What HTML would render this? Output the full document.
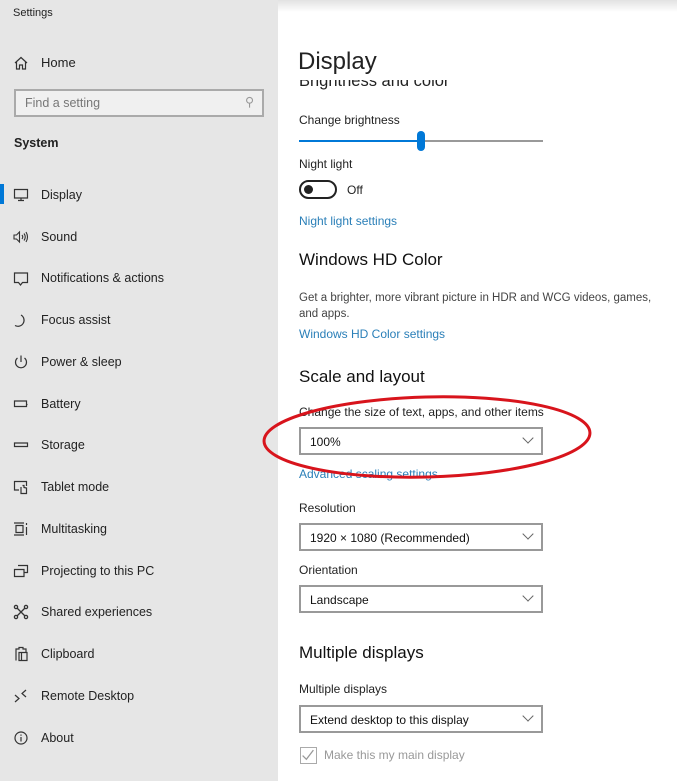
<!DOCTYPE html>
<html><head><meta charset="utf-8"><style>
*{margin:0;padding:0;box-sizing:border-box}
body{width:677px;height:781px;overflow:hidden;font-family:"Liberation Sans",sans-serif;color:#000;position:relative;background:#fff}
#side{position:absolute;left:0;top:0;width:278px;height:781px;background:#e6e6e6}
.a{position:absolute;white-space:nowrap}
.it{position:absolute;left:41px;font-size:12.5px;color:#222}
.ic{position:absolute;left:13px;width:16px;height:16px}
.dd{position:absolute;left:299px;width:244px;height:28px;border:2px solid #999;background:#fff;font-size:12px;padding:6px 0 0 9px;color:#111}
.dd:after{content:"";position:absolute;right:9px;top:5px;width:7px;height:7px;border-right:1px solid #666;border-bottom:1px solid #666;transform:rotate(45deg)}
.h{position:absolute;left:299px;font-size:17px;color:#111}
.lb{position:absolute;left:299px;font-size:12px;color:#222}
.lk{position:absolute;left:299px;font-size:12px;color:#2a7fb8}
</style></head><body>
<div style="position:absolute;left:278px;top:0;width:399px;height:12px;background:linear-gradient(#e2e2e2,#fff)"></div>
<div id="side">
<div class="a" style="left:13px;top:7px;font-size:11px;color:#222">Settings</div>
<svg class="ic" style="top:55px" viewBox="0 0 16 16" fill="none" stroke="#333" stroke-width="1.2"><path d="M2 8L8 2.5 14 8M3.5 6.5V14H6.5V10H9.5V14H12.5V6.5"/></svg>
<div class="it" style="top:55px;font-size:13px">Home</div>
<div class="a" style="left:14px;top:89px;width:250px;height:28px;border:2px solid #aaa;background:#f0f0f0;font-size:12.5px;color:#777;padding:5px 0 0 9px">Find a setting<span style="position:absolute;right:8px;top:3px;color:#999;transform:scaleX(-1);display:inline-block">⚲</span></div>
<div class="a" style="left:14px;top:136px;font-size:12.5px;font-weight:bold;color:#222">System</div>
<div class="a" style="left:0;top:184px;width:4px;height:20px;background:#0078d7"></div>
<svg class="ic" style="top:187px" viewBox="0 0 16 16" fill="none" stroke="#333" stroke-width="1.2"><path d="M1.5 2.5H14.5V11H1.5ZM8 11V13.5M5 13.5H11"/></svg>
<div class="it" style="top:188px">Display</div>
<svg class="ic" style="top:229px" viewBox="0 0 16 16" fill="none" stroke="#333" stroke-width="1.1"><path d="M1 6H3.5L6.5 3V13L3.5 10H1ZM9 6Q10.5 8 9 10M11 4.5Q13.5 8 11 11.5M13 3Q16 8 13 13"/></svg>
<div class="it" style="top:230px">Sound</div>
<svg class="ic" style="top:271px" viewBox="0 0 16 16" fill="none" stroke="#333" stroke-width="1.2"><path d="M1.5 2H14.5V11.5H9.5L7.5 14L5.5 11.5H1.5Z"/></svg>
<div class="it" style="top:271px">Notifications &amp; actions</div>
<svg class="ic" style="top:313px" viewBox="0 0 16 16" fill="none" stroke="#333" stroke-width="1.2"><path d="M8 2A6 6 0 1 1 2 12.5A5 5 0 0 0 8 2Z"/></svg>
<div class="it" style="top:313px">Focus assist</div>
<svg class="ic" style="top:354px" viewBox="0 0 16 16" fill="none" stroke="#333" stroke-width="1.2"><path d="M8 1.5V8M4.5 4A5.5 5.5 0 1 0 11.5 4"/></svg>
<div class="it" style="top:355px">Power &amp; sleep</div>
<svg class="ic" style="top:396px" viewBox="0 0 16 16" fill="none" stroke="#333" stroke-width="1.2"><path d="M1.5 5H13.5V10.5H1.5ZM13.5 7V8.5H14.5"/></svg>
<div class="it" style="top:397px">Battery</div>
<svg class="ic" style="top:437px" viewBox="0 0 16 16" fill="none" stroke="#333" stroke-width="1.2"><path d="M1.5 6H14.5V9.5H1.5Z"/></svg>
<div class="it" style="top:438px">Storage</div>
<svg class="ic" style="top:479px" viewBox="0 0 16 16" fill="none" stroke="#333" stroke-width="1.2"><path d="M6 11H1.5V2.5H13.5V7M8 8V14.5H13.5V9L11 8.5V6.5H9.5"/></svg>
<div class="it" style="top:480px">Tablet mode</div>
<svg class="ic" style="top:521px" viewBox="0 0 16 16" fill="none" stroke="#333" stroke-width="1.2"><path d="M1 2H11M1 14H11M3 4.5H10V11.5H3ZM13.5 2V4M13.5 6V14"/></svg>
<div class="it" style="top:522px">Multitasking</div>
<svg class="ic" style="top:563px" viewBox="0 0 16 16" fill="none" stroke="#333" stroke-width="1.2"><path d="M5 2.5H14.5V9.5H11M1.5 6.5H11V13.5H1.5Z"/></svg>
<div class="it" style="top:564px">Projecting to this PC</div>
<svg class="ic" style="top:604px" viewBox="0 0 16 16" fill="none" stroke="#333" stroke-width="1.3"><path d="M4 4L12 12M12 4L4 12"/><circle cx="3" cy="3" r="1.6"/><circle cx="13" cy="3" r="1.6"/><circle cx="3" cy="13" r="1.6"/><circle cx="13" cy="13" r="1.6"/></svg>
<div class="it" style="top:605px">Shared experiences</div>
<svg class="ic" style="top:646px" viewBox="0 0 16 16" fill="none" stroke="#333" stroke-width="1.2"><path d="M3 14.5V3H6V1.5H10V3H13V6M6 6.5H14V14.5H6ZM8.5 6.5V14.5"/></svg>
<div class="it" style="top:647px">Clipboard</div>
<svg class="ic" style="top:688px" viewBox="0 0 16 16" fill="none" stroke="#333" stroke-width="1.2"><path d="M2 7L6 10.5L2 14M13 2L9 5.5L13 9"/></svg>
<div class="it" style="top:689px">Remote Desktop</div>
<svg class="ic" style="top:730px" viewBox="0 0 16 16" fill="none" stroke="#333" stroke-width="1.2"><circle cx="8" cy="8" r="6"/><path d="M8 7V11.5M8 4.5V5.8"/></svg>
<div class="it" style="top:731px">About</div>
</div>

<div class="a" style="left:298px;top:48px;font-size:24px;color:#222">Display</div>
<div class="a" style="left:299px;top:80px;height:12px;overflow:hidden"><div style="font-size:16.5px;margin-top:-8px;color:#222">Brightness and color</div></div>
<div class="lb" style="top:113px">Change brightness</div>
<div class="a" style="left:299px;top:140px;width:122px;height:2px;background:#0078d7"></div>
<div class="a" style="left:421px;top:140px;width:122px;height:2px;background:#999"></div>
<div class="a" style="left:417px;top:131px;width:8px;height:20px;border-radius:4px;background:#0078d7"></div>
<div class="lb" style="top:157px">Night light</div>
<div class="a" style="left:299px;top:180px;width:38px;height:19px;border:2px solid #222;border-radius:10px"><div style="position:absolute;left:3px;top:3px;width:9px;height:9px;border-radius:50%;background:#222"></div></div>
<div class="lb" style="left:347px;top:183px">Off</div>
<div class="lk" style="top:214px">Night light settings</div>
<div class="h" style="top:250px">Windows HD Color</div>
<div class="lb" style="top:290px;font-size:11.5px;color:#444;line-height:16px;width:366px;white-space:normal">Get a brighter, more vibrant picture in HDR and WCG videos, games, and apps.</div>
<div class="lk" style="top:327px">Windows HD Color settings</div>
<div class="h" style="top:367px">Scale and layout</div>
<div class="lb" style="top:405px">Change the size of text, apps, and other items</div>
<div class="dd" style="top:427px">100%</div>
<div class="lk" style="top:467px">Advanced scaling settings</div>
<svg class="a" style="left:0;top:0" width="677" height="781"><ellipse cx="427" cy="437" rx="163" ry="40" transform="rotate(-1.5 427 437)" fill="none" stroke="#d8141c" stroke-width="3"/></svg>
<div class="lb" style="top:501px">Resolution</div>
<div class="dd" style="top:523px">1920 × 1080 (Recommended)</div>
<div class="lb" style="top:563px">Orientation</div>
<div class="dd" style="top:585px">Landscape</div>
<div class="h" style="top:643px">Multiple displays</div>
<div class="lb" style="top:682px">Multiple displays</div>
<div class="dd" style="top:705px">Extend desktop to this display</div>
<div class="a" style="left:300px;top:747px;width:17px;height:17px;border:1.5px solid #aaa"><svg width="14" height="14" viewBox="0 0 13 13" style="position:absolute;left:0;top:0"><path d="M1.5 7L5 10.5L11.5 2" fill="none" stroke="#999" stroke-width="1.2"/></svg></div>
<div class="lb" style="left:324px;top:748px;color:#999">Make this my main display</div>
</body></html>
